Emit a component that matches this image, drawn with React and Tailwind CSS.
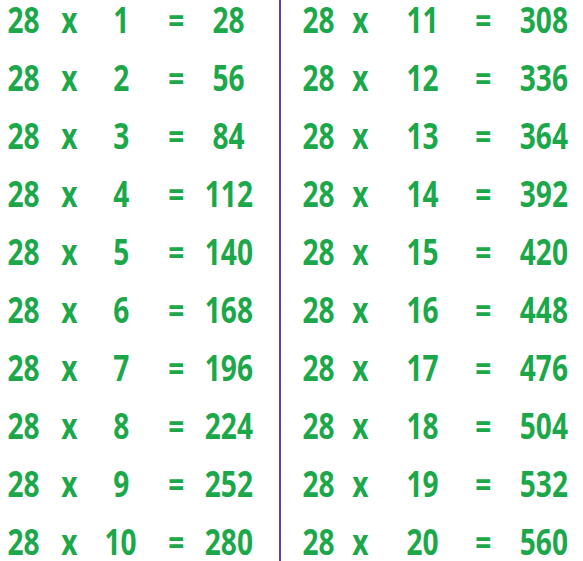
import React from 'react';

const rows = Array.from({ length: 10 }, (_, i) => i + 1);

// each cell is a box centred on the column's centre in the reference
const leftCols = ['w-[46px]', 'w-[44px]', 'w-[60px]', 'w-[50px]', 'w-[56px]'];
const rightCols = ['w-[44px]', 'w-[38px]', 'w-[88px]', 'w-[32px]', 'w-[90px]'];

const Row = ({ n, right }) => {
  const widths = right ? rightCols : leftCols;
  const cells = ['28', 'x', String(n), '=', String(28 * n)];
  return (
    <div className="flex h-[58px] items-start leading-[40px]">
      {cells.map((c, i) => (
        <div key={i} className={`${widths[i]} flex shrink-0 justify-center whitespace-nowrap`}>
          <span className="inline-block scale-x-[0.78]">{c}</span>
        </div>
      ))}
    </div>
  );
};

export default function App() {
  return (
    <div
      className="flex h-[561px] w-[583px] overflow-hidden bg-white text-[36px] font-bold text-[#1ca84a]"
      style={{ fontFamily: '"Open Sans", "Liberation Sans", sans-serif' }}
    >
      {/* 28 x 1 .. 28 x 10 */}
      <div className="w-[279px] shrink-0 pl-[1px]">
        {rows.map((n) => (
          <Row key={n} n={n} />
        ))}
      </div>

      <div className="w-[2px] shrink-0 bg-[#6b3fa0]" />

      {/* 28 x 11 .. 28 x 20 */}
      <div className="flex-1 pl-[16px]">
        {rows.map((n) => (
          <Row key={n} n={n + 10} right />
        ))}
      </div>
    </div>
  );
}
